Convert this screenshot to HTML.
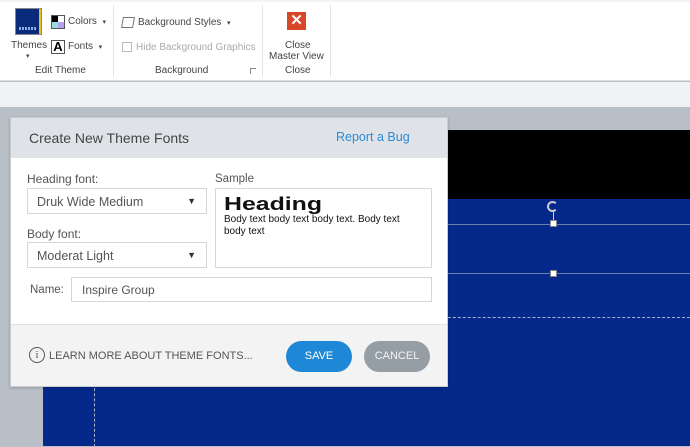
<!DOCTYPE html>
<html><head><style>
*{margin:0;padding:0;box-sizing:border-box}
body{width:690px;height:446px;overflow:hidden;position:relative;background:#b9bfc6;font-family:"Liberation Sans",sans-serif}
.a{position:absolute}
.rib{left:0;top:0;width:690px;height:81px;background:#fff;border-bottom:1px solid #dde1e6}
.t{font-size:10px;color:#444;white-space:nowrap}
.sep{width:1px;background:#e1e4e8;top:5px;height:72px}
.lbl{font-size:10px;color:#444;top:65px}
</style></head><body>
<div class="a rib">
 <div class="a" style="left:0;top:0;width:690px;height:2px;background:#f2f4f7"></div>
 <div class="a" style="left:15px;top:8px;width:27px;height:27px;border:1px solid #888;background:#0a2a7c"><div class="a" style="left:3px;top:18px;width:18px;height:3px;background:repeating-linear-gradient(90deg,#8fa8e8 0 2px,#0a2a7c 2px 3px)"></div><div class="a" style="right:0;top:0;width:2px;height:25px;background:#e8c020"></div></div>
 <div class="a t" style="left:11px;top:40px;font-size:10px">Themes</div>
 <div class="a t" style="left:26px;top:52px;font-size:7px">▾</div>
 <div class="a" style="left:51px;top:15px;width:14px;height:14px;border:1px solid #555;background:linear-gradient(90deg,#000 50%,#fff 50%)"><div class="a" style="left:0;top:6px;width:6px;height:6px;background:#9dd"></div><div class="a" style="left:6px;top:6px;width:6px;height:6px;background:#b8a0f0"></div></div>
 <div class="a t" style="left:68px;top:16px;font-size:10px">Colors &nbsp;<span style="font-size:7px">▾</span></div>
 <div class="a" style="left:51px;top:40px;width:14px;height:14px;border:1px solid #555;font-weight:bold;font-size:13px;line-height:12px;text-align:center">A</div>
 <div class="a t" style="left:68px;top:41px;font-size:10px">Fonts &nbsp;<span style="font-size:7px">▾</span></div>
 <div class="a lbl" style="left:35px">Edit Theme</div>
 <div class="a sep" style="left:113px"></div>
 <div class="a" style="left:122px;top:17px;width:12px;height:11px;border:1px solid #777;transform:skewX(-10deg)"></div>
 <div class="a t" style="left:138px;top:17px;font-size:10px">Background Styles &nbsp;<span style="font-size:7px">▾</span></div>
 <div class="a" style="left:122px;top:42px;width:10px;height:10px;border:1px solid #bbb"></div>
 <div class="a t" style="left:136px;top:42px;color:#aaa;font-size:10px">Hide Background Graphics</div>
 <div class="a lbl" style="left:155px">Background</div>
 <div class="a" style="left:250px;top:68px;width:6px;height:6px;border:1px solid #888;border-width:1px 0 0 1px"></div>
 <div class="a sep" style="left:262px"></div>
 <div class="a" style="left:287px;top:12px;width:19px;height:18px;background:#d9472b;color:#fff;font-weight:bold;font-size:15px;line-height:18px;text-align:center">✕</div>
 <div class="a t" style="left:285px;top:40px;font-size:10px">Close</div>
 <div class="a t" style="left:269px;top:51px;font-size:10px">Master View</div>
 <div class="a lbl" style="left:285px">Close</div>
 <div class="a sep" style="left:330px"></div>
</div>
<div class="a" style="left:0;top:82px;width:690px;height:25px;background:#f0f2f5"></div>
<!-- slide -->
<div class="a" style="left:43px;top:130px;width:647px;height:316px;background:#04298a"></div>
<div class="a" style="left:43px;top:130px;width:647px;height:69px;background:#000"></div>
<div class="a" style="left:43px;top:224px;width:647px;height:1px;background:#6a7fae"></div>
<div class="a" style="left:43px;top:273px;width:647px;height:1px;background:#6a7fae"></div>
<div class="a" style="left:94px;top:317px;width:596px;border-top:1px dashed #a9b3cc"></div>
<div class="a" style="left:94px;top:317px;height:130px;border-left:1px dashed #a9b3cc"></div>
<div class="a" style="left:550px;top:220px;width:7px;height:7px;background:#fff;border:1px solid #888"></div>
<div class="a" style="left:550px;top:270px;width:7px;height:7px;background:#fff;border:1px solid #888"></div>
<div class="a" style="left:553px;top:210px;width:1px;height:10px;background:#ccc"></div>
<div class="a" style="left:547px;top:201px;width:11px;height:11px;border:2px solid #ccc;border-radius:50%;border-right-color:transparent"></div>
<!-- dialog -->
<div class="a" style="left:10px;top:117px;width:438px;height:270px;background:#fff;border:1px solid #c9cdd2;box-shadow:0 1px 3px rgba(0,0,0,.2)">
 <div class="a" style="left:0;top:0;width:436px;height:40px;background:#dfe3e7"></div>
 <div class="a" style="left:18px;top:12px;font-size:14px;color:#444">Create New Theme Fonts</div>
 <div class="a" style="left:325px;top:12px;font-size:12.5px;color:#2a8ad6">Report a Bug</div>
 <div class="a" style="left:16px;top:54px;font-size:12px;color:#555">Heading font:</div>
 <div class="a" style="left:16px;top:70px;width:180px;height:26px;border:1px solid #d3d6da;font-size:12.5px;color:#555;padding:6px 9px">Druk Wide Medium<span style="position:absolute;right:10px;top:7px;font-size:9px;color:#333">▼</span></div>
 <div class="a" style="left:16px;top:109px;font-size:12px;color:#555">Body font:</div>
 <div class="a" style="left:16px;top:124px;width:180px;height:26px;border:1px solid #d3d6da;font-size:12.5px;color:#555;padding:6px 9px">Moderat Light<span style="position:absolute;right:10px;top:7px;font-size:9px;color:#333">▼</span></div>
 <div class="a" style="left:204px;top:55px;font-size:11.5px;color:#555">Sample</div>
 <div class="a" style="left:204px;top:70px;width:217px;height:80px;border:1px solid #d3d6da;padding:5px 8px">
  <div style="font-size:18px;font-weight:bold;color:#111;transform:scaleX(1.38);transform-origin:left;line-height:20px">Heading</div>
  <div style="font-size:10px;color:#111;line-height:12px">Body text body text body text. Body text body text</div>
 </div>
 <div class="a" style="left:19px;top:166px;font-size:11.5px;color:#555">Name:</div>
 <div class="a" style="left:60px;top:159px;width:361px;height:25px;border:1px solid #d3d6da;font-size:12px;color:#555;padding:5px 10px">Inspire Group</div>
 <div class="a" style="left:0;top:206px;width:436px;height:62px;background:#f3f3f3;border-top:1px solid #dfe3e7"></div>
 <div class="a" style="left:18px;top:229px;width:16px;height:16px;border:1.3px solid #555;border-radius:50%;font-size:11px;color:#555;text-align:center;line-height:14px;font-family:'Liberation Serif',serif">i</div>
 <div class="a" style="left:38px;top:232px;font-size:11px;color:#555">LEARN MORE ABOUT THEME FONTS...</div>
 <div class="a" style="left:275px;top:223px;width:66px;height:31px;border-radius:16px;background:#1f88d6;color:#fff;font-size:11px;text-align:center;line-height:31px">SAVE</div>
 <div class="a" style="left:353px;top:223px;width:66px;height:31px;border-radius:16px;background:#959da5;color:#f3f3f3;font-size:11px;text-align:center;line-height:31px">CANCEL</div>
</div>
</body></html>
